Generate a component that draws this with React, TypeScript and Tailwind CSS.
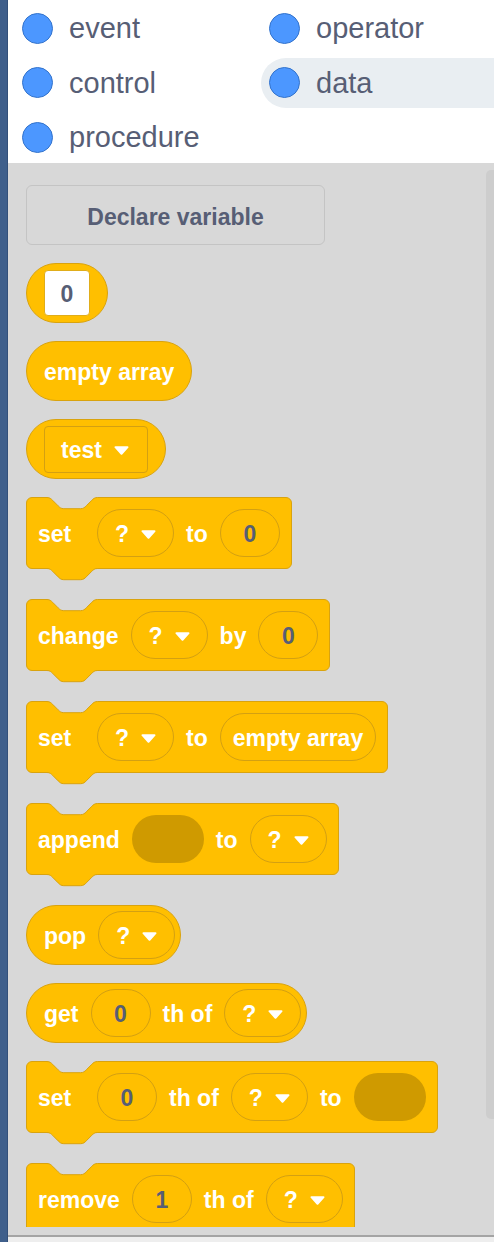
import type { ReactNode } from "react";

const CURVE =
  "C2.8,0.5 4.2,1.9 5.6,3.3 L11.2,8.9 C12.6,10.3 14,11.7 16.8,11.7 H33.6 C36.4,11.7 37.8,10.3 39.2,8.9 L44.8,3.3 C46.2,1.9 47.6,0.5 50.4,0.5";

const categories = [
  { name: "event", active: false },
  { name: "operator", active: false },
  { name: "control", active: false },
  { name: "data", active: true },
  { name: "procedure", active: false },
];

function Caret() {
  return (
    <svg width="15" height="9" viewBox="0 0 15 9" className="mt-[2px] shrink-0">
      <path d="M1.5 1.2 H13.5 L7.5 7.8 Z" fill="#fff" stroke="#fff" strokeWidth="2" strokeLinejoin="round" />
    </svg>
  );
}

function Text({ children, className = "" }: { children: ReactNode; className?: string }) {
  return <span className={`pt-[3px] text-[23px] font-bold leading-none text-white whitespace-nowrap ${className}`}>{children}</span>;
}

function Dropdown({ label = "?" }: { label?: string }) {
  return (
    <div className="flex h-[48px] shrink-0 items-center gap-[12px] rounded-full border border-[#d3a012] px-[17px]">
      <Text>{label}</Text>
      <Caret />
    </div>
  );
}

function Num({ v }: { v: string }) {
  return (
    <div className="flex h-[48px] w-[60px] shrink-0 items-center justify-center rounded-full border border-[#d3a012]">
      <span className="pt-[3px] text-[23px] font-bold leading-none text-[#575e75]">{v}</span>
    </div>
  );
}

function Slot() {
  return <div className="h-[48px] w-[72px] shrink-0 rounded-full bg-[#cf9a00]" />;
}

function Reporter({ children, className = "" }: { children: ReactNode; className?: string }) {
  return (
    <div className={`flex h-[60px] items-center gap-[12px] rounded-full border border-[#d9a30e] bg-[#ffbf00] pl-[17px] ${className}`}>
      {children}
    </div>
  );
}

function Stack({ children }: { children: ReactNode }) {
  return (
    <div className="relative mb-[12px] flex h-[72px] items-center gap-[12px] rounded-[6px] border border-[#d9a30e] bg-[#ffbf00] px-[11px]">
      {/* notch on top */}
      <svg className="absolute left-[20px] top-[-1px]" width="51" height="13" viewBox="0 0 51 13">
        <path d={`M0,0 L0,0.5 ${CURVE} L50.4,0 Z`} fill="#d8d8d8" />
        <path d={`M0,0.5 ${CURVE}`} fill="none" stroke="#d9a30e" strokeWidth="1" />
      </svg>
      {/* bump below */}
      <svg className="absolute left-[20px] top-full" width="51" height="13" viewBox="0 0 51 13">
        <path d={`M0,0 L0,0.5 ${CURVE} L50.4,0 Z`} fill="#ffbf00" />
        <path d={`M0,0.5 ${CURVE}`} fill="none" stroke="#d9a30e" strokeWidth="1" />
      </svg>
      {children}
    </div>
  );
}

export default function App() {
  return (
    <div className="flex h-[1242px] w-[494px] overflow-hidden bg-white font-['Liberation_Sans',Arial,sans-serif]">
      <div className="w-[8px] shrink-0 border-r border-[#33507a] bg-[#3f5f8b]" />

      <div className="flex min-w-0 flex-1 flex-col">
        {/* category list */}
        <div className="grid h-[163px] shrink-0 grid-cols-[247px_1fr] gap-y-[3.5px] overflow-hidden bg-white pl-[6px] pt-[3px]">
          {categories.map((c) => (
            <div
              key={c.name}
              className={`flex h-[50px] w-[280px] items-center gap-[16px] rounded-full pl-[8px] ${c.active ? "bg-[#e9eef2]" : ""}`}
            >
              <span className="h-[31px] w-[31px] shrink-0 rounded-full border border-[#3373cc] bg-[#4c97ff]" />
              <span className="pt-[1px] text-[29px] leading-none text-[#575e75]">{c.name}</span>
            </div>
          ))}
        </div>

        {/* flyout */}
        <div className="relative h-[1064px] shrink-0 overflow-hidden bg-[#d8d8d8]">
          <div className="flex flex-col items-start gap-[18px] pl-[18px] pt-[22px]">
            <button className="flex h-[60px] w-[299px] items-center justify-center rounded-[6px] border border-[#c4c4c4] pt-[4px] text-[23px] font-bold text-[#575e75]">
              Declare variable
            </button>

            <Reporter className="pr-[17px]">
              <div className="flex h-[46px] w-[46px] items-center justify-center rounded-[4px] border border-[#e0ad1a] bg-white">
                <span className="pt-[3px] text-[23px] font-bold leading-none text-[#575e75]">0</span>
              </div>
            </Reporter>

            <Reporter className="pr-[17px]">
              <Text>empty array</Text>
            </Reporter>

            <Reporter className="pr-[17px]">
              <div className="flex h-[47px] w-[104px] items-center gap-[12px] rounded-[4px] border border-[#d3a012] pl-[16px]">
                <Text>test</Text>
                <Caret />
              </div>
            </Reporter>

            <Stack>
              <Text className="w-[47px]">set</Text>
              <Dropdown />
              <Text>to</Text>
              <Num v="0" />
            </Stack>

            <Stack>
              <Text>change</Text>
              <Dropdown />
              <Text>by</Text>
              <Num v="0" />
            </Stack>

            <Stack>
              <Text className="w-[47px]">set</Text>
              <Dropdown />
              <Text>to</Text>
              <div className="flex h-[48px] items-center rounded-full border border-[#d3a012] px-[12px]">
                <Text>empty array</Text>
              </div>
            </Stack>

            <Stack>
              <Text>append</Text>
              <Slot />
              <Text>to</Text>
              <Dropdown />
            </Stack>

            <Reporter className="pr-[5px]">
              <Text>pop</Text>
              <Dropdown />
            </Reporter>

            <Reporter className="pr-[5px]">
              <Text>get</Text>
              <Num v="0" />
              <Text>th of</Text>
              <Dropdown />
            </Reporter>

            <Stack>
              <Text className="w-[47px]">set</Text>
              <Num v="0" />
              <Text>th of</Text>
              <Dropdown />
              <Text>to</Text>
              <Slot />
            </Stack>

            <Stack>
              <Text>remove</Text>
              <Num v="1" />
              <Text>th of</Text>
              <Dropdown />
            </Stack>
          </div>

          {/* scrollbar */}
          <div className="absolute right-0 top-[7px] h-[949px] w-[8px] rounded-l-[5px] bg-[#cdcdcd]" />
        </div>

        <div className="h-[8px] shrink-0 bg-[#d8d8d8]" />
        <div className="h-[2px] shrink-0 bg-[#a4a4a4]" />
        <div className="flex-1 bg-[#eeeeee]" />
      </div>
    </div>
  );
}
